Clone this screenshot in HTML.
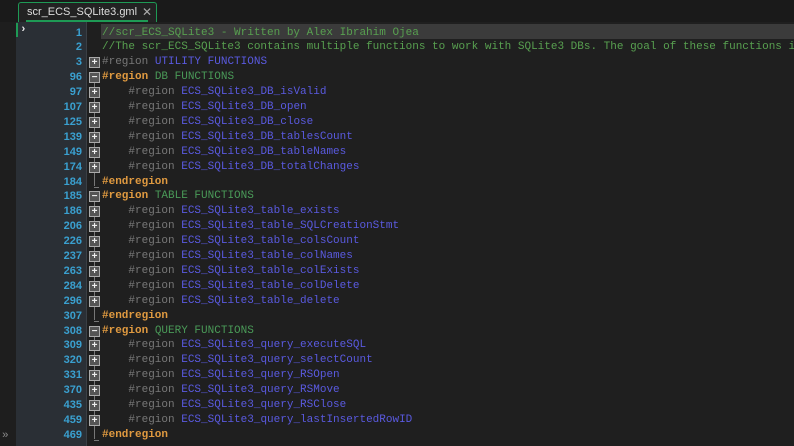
<!DOCTYPE html><html><head><style>
*{margin:0;padding:0;box-sizing:border-box}
body{width:794px;height:446px;background:#1f1f1f;overflow:hidden;position:relative;font-family:"Liberation Mono",monospace;font-size:11px}
.top{position:absolute;left:0;top:0;width:794px;height:22px;background:#1a1a1a}
.tab{position:absolute;left:18px;top:2px;width:139px;height:20px;background:#222;border:1px solid #1e9a55;border-bottom:none;border-radius:3px 3px 0 0;color:#ddd;font-family:"Liberation Sans",sans-serif;font-size:11px;padding:3px 0 0 8px}
.tab:after{content:"";position:absolute;left:7px;right:8px;bottom:0;height:2px;background:#1e9a55}
.tab span{color:#aaa;position:absolute;left:123px;top:2px;font-size:12px}
.left{position:absolute;left:0;top:22px;width:16px;height:424px;background:#1e1e1e}
.gut{position:absolute;left:16px;top:22px;width:70px;height:424px;background:#2a2f35}
.sep{position:absolute;left:86px;top:22px;width:1px;height:424px;background:#3a3f45}
.hl{position:absolute;left:101px;top:24px;width:693px;height:15px;background:#3b3b3b}
.mark{position:absolute;left:16px;top:23px;width:2px;height:14px;background:#1e9a55}
.ln{position:absolute;left:20px;width:62px;text-align:right;color:#3aa0d0;font-size:11px;line-height:15px;font-family:"Liberation Sans",sans-serif;font-weight:bold}
.code{position:absolute;left:102px;white-space:pre;line-height:15px;color:#ccc}
.fold{position:absolute;left:89px;width:11px;height:11px;border:1px solid #aaa;background:#555;color:#eee;font-size:10px;line-height:9px;text-align:center;font-family:"Liberation Sans",sans-serif;font-weight:bold}
.vl{position:absolute;left:94px;width:1px;background:#777}
.c{color:#58a050}.r{color:#777}.n{color:#5a5ae0}.o{color:#e09a40;font-weight:bold}.g{color:#4a9a58}
</style></head><body>
<div class="top"></div><div class="tab">scr_ECS_SQLite3.gml<span>✕</span></div>
<div class="left"></div><div class="gut"></div><div class="sep"></div><div class="hl"></div><div class="mark"></div>
<div style="position:absolute;left:20px;top:24px;color:#eee;font-weight:bold;font-size:11px">›</div>
<div style="position:absolute;left:2px;top:430px;color:#888;font-size:11px">»</div>
<div class="vl" style="top:82px;height:104px"></div>
<div class="vl" style="top:201px;height:119px"></div>
<div class="vl" style="top:335px;height:104px"></div>
<div id="w"></div>
<script>
const L=[
["1","",'<span class="c">//scr_ECS_SQLite3 - Written by Alex Ibrahim Ojea</span>'],
["2","",'<span class="c">//The scr_ECS_SQLite3 contains multiple functions to work with SQLite3 DBs. The goal of these functions is</span>'],
["3","+",'<span class="r">#region</span> <span class="n">UTILITY FUNCTIONS</span>'],
["96","-",'<span class="o">#region</span> <span class="g">DB FUNCTIONS</span>'],
["97","+",'    <span class="r">#region</span> <span class="n">ECS_SQLite3_DB_isValid</span>'],
["107","+",'    <span class="r">#region</span> <span class="n">ECS_SQLite3_DB_open</span>'],
["125","+",'    <span class="r">#region</span> <span class="n">ECS_SQLite3_DB_close</span>'],
["139","+",'    <span class="r">#region</span> <span class="n">ECS_SQLite3_DB_tablesCount</span>'],
["149","+",'    <span class="r">#region</span> <span class="n">ECS_SQLite3_DB_tableNames</span>'],
["174","+",'    <span class="r">#region</span> <span class="n">ECS_SQLite3_DB_totalChanges</span>'],
["184","",'<span class="o">#endregion</span>'],
["185","-",'<span class="o">#region</span> <span class="g">TABLE FUNCTIONS</span>'],
["186","+",'    <span class="r">#region</span> <span class="n">ECS_SQLite3_table_exists</span>'],
["206","+",'    <span class="r">#region</span> <span class="n">ECS_SQLite3_table_SQLCreationStmt</span>'],
["226","+",'    <span class="r">#region</span> <span class="n">ECS_SQLite3_table_colsCount</span>'],
["237","+",'    <span class="r">#region</span> <span class="n">ECS_SQLite3_table_colNames</span>'],
["263","+",'    <span class="r">#region</span> <span class="n">ECS_SQLite3_table_colExists</span>'],
["284","+",'    <span class="r">#region</span> <span class="n">ECS_SQLite3_table_colDelete</span>'],
["296","+",'    <span class="r">#region</span> <span class="n">ECS_SQLite3_table_delete</span>'],
["307","",'<span class="o">#endregion</span>'],
["308","-",'<span class="o">#region</span> <span class="g">QUERY FUNCTIONS</span>'],
["309","+",'    <span class="r">#region</span> <span class="n">ECS_SQLite3_query_executeSQL</span>'],
["320","+",'    <span class="r">#region</span> <span class="n">ECS_SQLite3_query_selectCount</span>'],
["331","+",'    <span class="r">#region</span> <span class="n">ECS_SQLite3_query_RSOpen</span>'],
["370","+",'    <span class="r">#region</span> <span class="n">ECS_SQLite3_query_RSMove</span>'],
["435","+",'    <span class="r">#region</span> <span class="n">ECS_SQLite3_query_RSClose</span>'],
["459","+",'    <span class="r">#region</span> <span class="n">ECS_SQLite3_query_lastInsertedRowID</span>'],
["469","",'<span class="o">#endregion</span>']];
let h='';L.forEach((l,i)=>{const t=25.5+i*14.9;
h+=`<div class="ln" style="top:${t}px">${l[0]}</div><div class="code" style="top:${t}px">${l[2]}</div>`;
if(l[1])h+=`<div class="fold" style="top:${t+2}px">${l[1]=='+'?'+':'−'}</div>`;
if(l[0]=='184'||l[0]=='307'||l[0]=='469')h+=`<div style="position:absolute;left:94px;top:${t+12}px;width:5px;height:1px;background:#777"></div>`;});
document.getElementById('w').innerHTML=h;
</script></body></html>
